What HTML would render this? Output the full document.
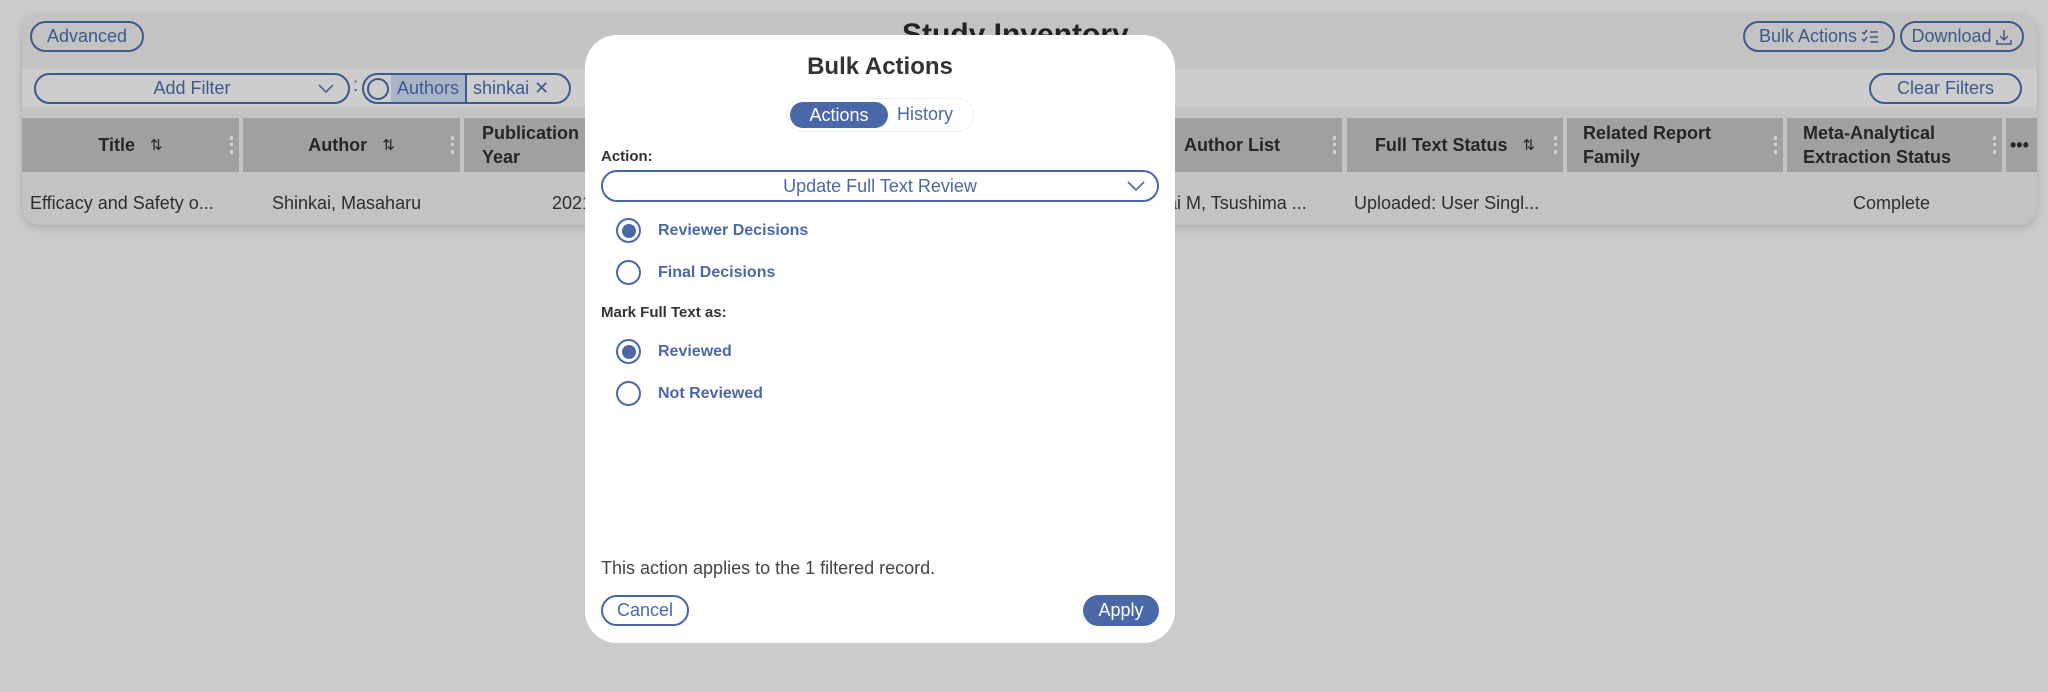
<!DOCTYPE html>
<html><head><meta charset="utf-8"><style>
*{box-sizing:border-box;margin:0;padding:0}
body{width:2048px;height:692px;background:#cbcbcb;font-family:"Liberation Sans",sans-serif;position:relative;overflow:hidden;color:#2e2e2e}
.abs{position:absolute}
.card{left:22px;top:13px;width:2015px;height:212px;background:#c3c3c3;border-radius:18px;box-shadow:0 3px 8px rgba(0,0,0,.15);overflow:hidden}
.btn{position:absolute;border:2px solid #3d5a8f;border-radius:18px;color:#3d5a8f;font-size:18px;display:flex;align-items:center;justify-content:center;background:transparent}
.hdr{position:absolute;top:105px;height:54px;background:#a0a0a0;font-weight:bold;font-size:18px;color:#262626;display:flex;align-items:center}
.cell{position:absolute;top:176px;font-size:18px;color:#2e2e2e}
.dots{position:absolute;right:6px;top:18px;width:3px;height:18px;border-left:3px dotted #d0d0d0}
.modal{left:585px;top:35px;width:590px;height:608px;background:#fff;border-radius:32px}
.blue{color:#4a68a8}
.radio{position:absolute;width:25px;height:25px;border:2px solid #4a68a8;border-radius:50%}
.radio.on::after{content:"";position:absolute;left:3.5px;top:3.5px;width:14px;height:14px;border-radius:50%;background:#4a68a8}
.rl{position:absolute;left:73px;font-weight:bold;font-size:16px;color:#4a68a8}
</style></head><body>
<div class="abs card">
  <div class="btn" style="left:8px;top:8px;width:114px;height:31px">Advanced</div>
  <div class="abs" style="left:880px;top:5px;font-size:30px;font-weight:bold;color:#222">Study Inventory</div>
  <div class="btn" style="left:1721px;top:8px;width:152px;height:31px">Bulk Actions <svg width="18" height="16" viewBox="0 0 18 16" style="margin-left:4px" fill="none" stroke="#3d5a8f" stroke-width="1.5"><path d="M1 3l2 2 3-4M1 10l2 2 3-4M9 3h8M9 8h8M9 13h8"/></svg></div>
  <div class="btn" style="left:1878px;top:8px;width:124px;height:31px">Download<svg width="18" height="18" viewBox="0 0 18 18" style="margin-left:3px" fill="none" stroke="#3d5a8f" stroke-width="1.5"><path d="M9 2v10M5 8l4 4 4-4M2 12v4h14v-4"/></svg></div>
  <div class="abs" style="left:0;top:56px;width:2015px;height:38px;background:#cdcdcd"></div>
  <div class="btn" style="left:12px;top:60px;width:316px;height:31px">Add Filter<svg style="position:absolute;right:14px" width="16" height="10" viewBox="0 0 16 10" fill="none" stroke="#3d5a8f" stroke-width="1.5"><path d="M1 1l7 7 7-7"/></svg></div>
  <div class="abs" style="left:331px;top:62px;font-size:19px;color:#3d5a8f">:</div>
  <div class="btn" style="left:340px;top:60px;width:209px;height:31px;justify-content:flex-start;overflow:hidden">
    <span style="width:22px;height:22px;border:2px solid #3d5a8f;border-radius:50%;margin-left:3px"></span>
    <span style="background:#aab4c8;padding:5px 6px;margin-left:2px;border-right:2px solid #3d5a8f">Authors</span>
    <span style="margin-left:6px">shinkai ✕</span></div>
  <div class="btn" style="left:1847px;top:60px;width:153px;height:31px">Clear Filters</div>
  <div class="hdr" style="left:0;width:217px;justify-content:center">Title&nbsp;&nbsp;&nbsp;<span style="font-weight:normal;font-size:15px">⇅</span><div class="dots"></div></div>
  <div class="hdr" style="left:221px;width:217px;justify-content:center">Author&nbsp;&nbsp;&nbsp;<span style="font-weight:normal;font-size:15px">⇅</span><div class="dots"></div></div>
  <div class="hdr" style="left:442px;width:300px;padding-left:18px;line-height:24px">Publication<br>Year</div>
  <div class="hdr" style="left:1100px;width:220px;justify-content:center">Author List<div class="dots"></div></div>
  <div class="hdr" style="left:1325px;width:216px;justify-content:center">Full Text Status&nbsp;&nbsp;&nbsp;<span style="font-weight:normal;font-size:15px">⇅</span><div class="dots"></div></div>
  <div class="hdr" style="left:1545px;width:216px;padding-left:16px;line-height:24px">Related Report<br>Family<div class="dots"></div></div>
  <div class="hdr" style="left:1765px;width:215px;padding-left:16px;line-height:24px">Meta-Analytical<br>Extraction Status<div class="dots"></div></div>
  <div class="hdr" style="left:1984px;width:40px;padding-left:4px">•••</div>
  <div class="cell" style="left:8px;top:180px">Efficacy and Safety o...</div>
  <div class="cell" style="left:250px;top:180px">Shinkai, Masaharu</div>
  <div class="cell" style="left:530px;top:180px">2021</div>
  <div class="cell" style="left:1100px;top:180px">Shinkai M, Tsushima ...</div>
  <div class="cell" style="left:1332px;top:180px">Uploaded: User Singl...</div>
  <div class="cell" style="left:1831px;top:180px">Complete</div>
</div>
<div class="abs modal">
  <div class="abs" style="left:0;width:590px;top:18px;text-align:center;font-weight:bold;font-size:24px;color:#333">Bulk Actions</div>
  <div class="abs" style="left:201px;top:63px;width:188px;height:34px;border:1px solid #eee;border-radius:17px"></div>
  <div class="abs" style="left:205px;top:67px;width:98px;height:26px;border-radius:13px;background:#4a68a8;color:#fff;font-size:18px;text-align:center;line-height:26px">Actions</div>
  <div class="abs blue" style="left:312px;top:69px;font-size:18px">History</div>
  <div class="abs" style="left:16px;top:113px;font-weight:bold;font-size:15px;color:#333">Action:</div>
  <div class="abs blue" style="left:16px;top:135px;width:558px;height:32px;border:2px solid #4a68a8;border-radius:16px;text-align:center;font-size:18px;line-height:28px">Update Full Text Review<svg style="position:absolute;right:12px;top:9px" width="18" height="11" viewBox="0 0 18 11" fill="none" stroke="#4a68a8" stroke-width="1.6"><path d="M1 1l8 8 8-8"/></svg></div>
  <div class="radio on" style="left:31px;top:183px"></div><div class="rl" style="top:187px">Reviewer Decisions</div>
  <div class="radio" style="left:31px;top:225px"></div><div class="rl" style="top:229px">Final Decisions</div>
  <div class="abs" style="left:16px;top:269px;font-weight:bold;font-size:15px;color:#333">Mark Full Text as:</div>
  <div class="radio on" style="left:31px;top:304px"></div><div class="rl" style="top:308px">Reviewed</div>
  <div class="radio" style="left:31px;top:346px"></div><div class="rl" style="top:350px">Not Reviewed</div>
  <div class="abs" style="left:16px;top:523px;font-size:18px;color:#444">This action applies to the 1 filtered record.</div>
  <div class="abs blue" style="left:16px;top:560px;width:88px;height:31px;border:2px solid #4a68a8;border-radius:16px;text-align:center;line-height:27px;font-size:18px">Cancel</div>
  <div class="abs" style="left:498px;top:560px;width:76px;height:31px;background:#4a68a8;border-radius:16px;text-align:center;line-height:31px;font-size:18px;color:#fff">Apply</div>
</div>
</body></html>
